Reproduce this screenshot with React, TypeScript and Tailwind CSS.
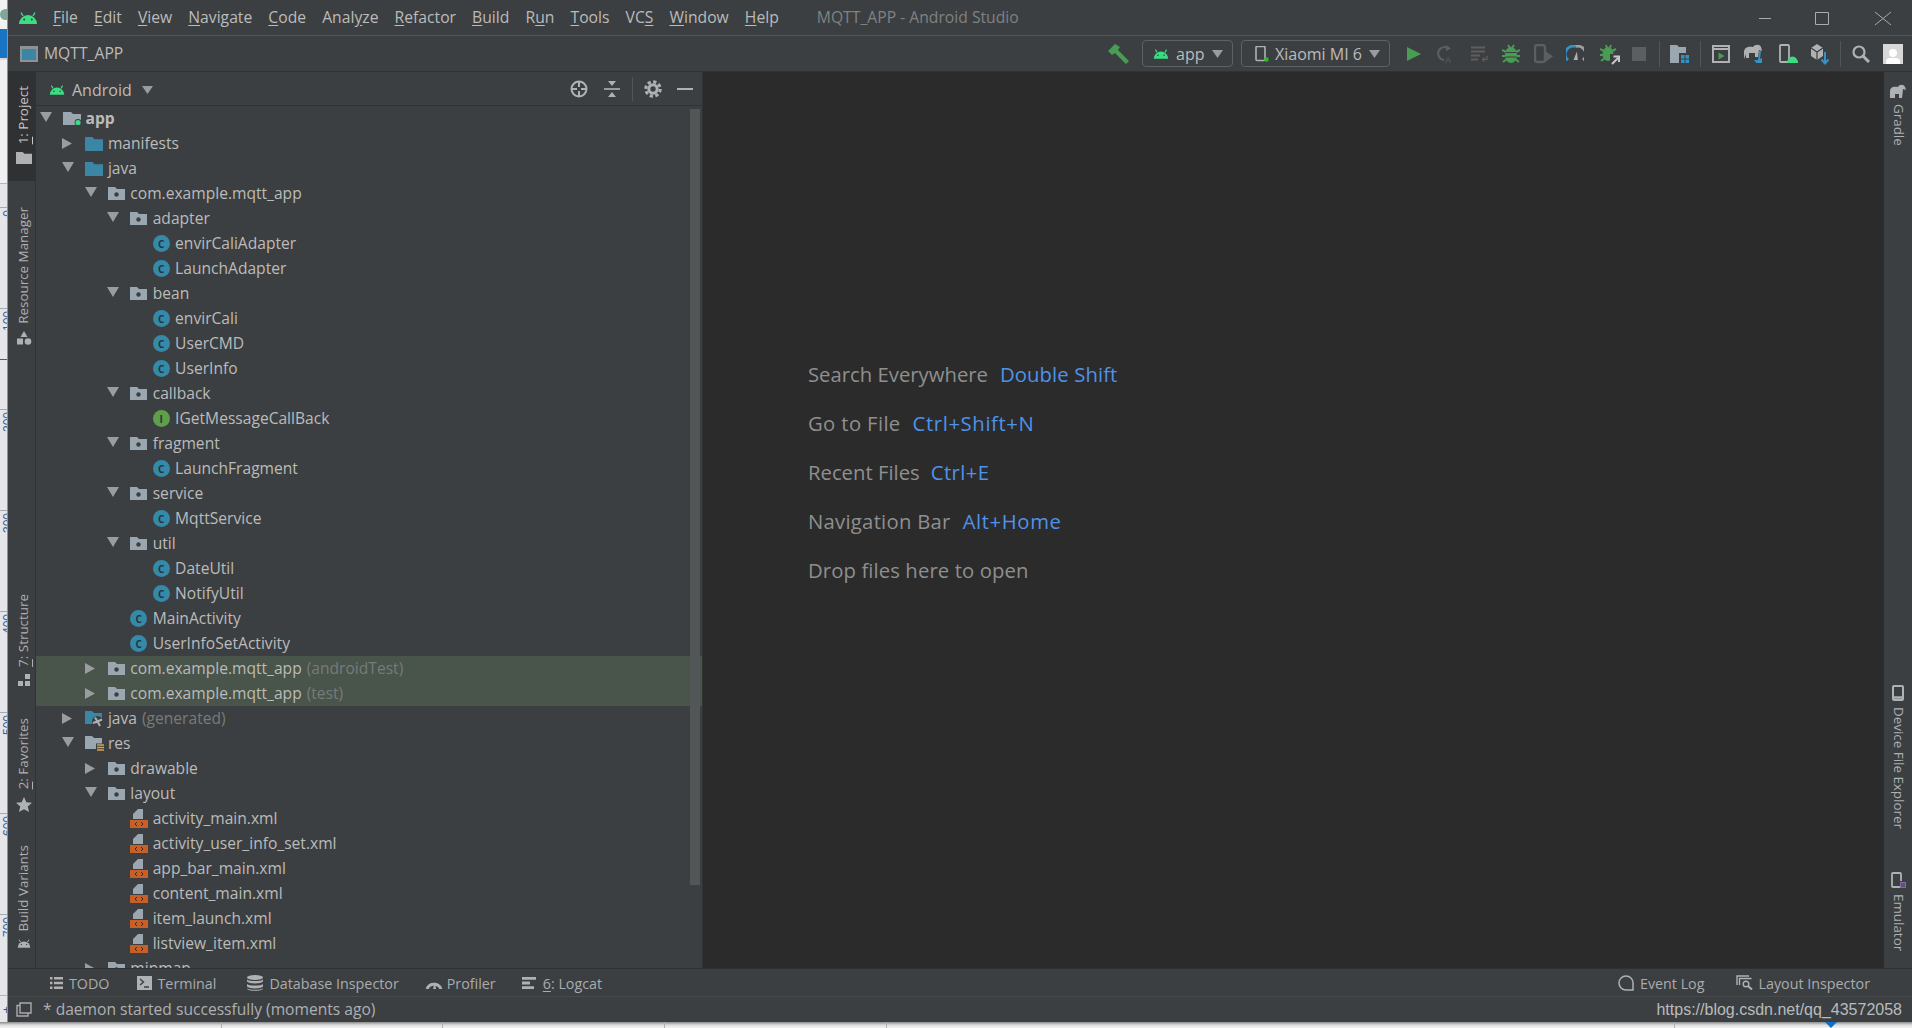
import type { ReactNode } from "react";

const FONT = "font-['Open_Sans',sans-serif]";

const Android = ({ className = "w-5 h-3", color = "#3ddc84" }: { className?: string; color?: string }) => (
  <svg viewBox="0 0 20 12" className={className}>
    <path d="M1 12a9 9 0 0 1 18 0z" fill={color} />
    <path d="M5 4 3 0.5M15 4 17 0.5" stroke={color} strokeWidth="1.4" />
    <circle cx="6.2" cy="7.6" r="1" fill="#3c3f41" />
    <circle cx="13.8" cy="7.6" r="1" fill="#3c3f41" />
  </svg>
);

const Folder = ({ color = "#9aa7b0", className = "w-[17px] h-[13px]" }: { color?: string; className?: string }) => (
  <svg viewBox="0 0 17 13" className={className}>
    <path d="M0 0h7l2 2h8v11H0z" fill={color} />
  </svg>
);

const PackageIcon = () => (
  <svg viewBox="0 0 17 13" className="w-[17px] h-[13px]">
    <path d="M0 0h7l2 2h8v11H0z" fill="#9aa7b0" />
    <circle cx="8.5" cy="7.5" r="2.2" fill="#3c3f41" />
  </svg>
);

const AppFolder = () => (
  <svg viewBox="0 0 19 15" className="w-[19px] h-[15px]">
    <path d="M0 0h8l2 2h8v11H0z" fill="#9aa7b0" transform="translate(0 1)" />
    <circle cx="15" cy="11.5" r="3.4" fill="#3c3f41" />
    <circle cx="15" cy="11.5" r="2.6" fill="#3ddc84" />
  </svg>
);

const GenFolder = () => (
  <svg viewBox="0 0 19 16" className="w-[19px] h-[16px]">
    <path d="M0 0h7l2 2h8v11H0z" fill="#3b86a5" />
    <circle cx="12.5" cy="10.5" r="5.5" fill="#3c3f41" />
    <path d="M12.5 10.5 10 6.5M12.5 10.5l4.5-2M12.5 10.5l2.5 4.5M12.5 10.5 8 12" stroke="#afb1b3" strokeWidth="2" />
  </svg>
);

const ResFolder = () => (
  <svg viewBox="0 0 19 16" className="w-[19px] h-[16px]">
    <path d="M0 0h7l2 2h8v11H0z" fill="#9aa7b0" />
    <rect x="11" y="7.5" width="8" height="8.5" fill="#3c3f41" />
    <path d="M12 9h7M12 11.5h7M12 14h7" stroke="#d9a343" strokeWidth="1.4" />
  </svg>
);

const ClassIcon = ({ letter = "C", bg = "bg-[#3589a9]" }: { letter?: string; bg?: string }) => (
  <span className={`flex h-[17px] w-[17px] items-center justify-center rounded-full ${bg} text-[10px] font-bold leading-none text-[#27343b]`}>
    {letter}
  </span>
);

const XmlIcon = () => (
  <svg viewBox="0 0 18 19" className="w-[18px] h-[19px]">
    <path d="M8 0h5v10H3V5z" fill="#9aa7b0" />
    <rect x="0" y="11" width="18" height="8" fill="#c75f27" />
    <path d="M7 13l-2 2 2 2M11 13l2 2-2 2" stroke="#2f2f2f" strokeWidth="1" fill="none" />
  </svg>
);

type Row = {
  d: number;
  label: string;
  icon: ReactNode;
  open?: boolean;
  bold?: boolean;
  suffix?: string;
  hl?: boolean;
};

const c = <ClassIcon />;
const p = <PackageIcon />;
const x = <XmlIcon />;
const blue = <Folder color="#3b86a5" className="w-[18px] h-[14px]" />;

const rows: Row[] = [
  { d: 0, label: "app", icon: <AppFolder />, open: true, bold: true },
  { d: 1, label: "manifests", icon: blue, open: false },
  { d: 1, label: "java", icon: blue, open: true },
  { d: 2, label: "com.example.mqtt_app", icon: p, open: true },
  { d: 3, label: "adapter", icon: p, open: true },
  { d: 4, label: "envirCaliAdapter", icon: c },
  { d: 4, label: "LaunchAdapter", icon: c },
  { d: 3, label: "bean", icon: p, open: true },
  { d: 4, label: "envirCali", icon: c },
  { d: 4, label: "UserCMD", icon: c },
  { d: 4, label: "UserInfo", icon: c },
  { d: 3, label: "callback", icon: p, open: true },
  { d: 4, label: "IGetMessageCallBack", icon: <ClassIcon letter="I" bg="bg-[#5f9e4a]" /> },
  { d: 3, label: "fragment", icon: p, open: true },
  { d: 4, label: "LaunchFragment", icon: c },
  { d: 3, label: "service", icon: p, open: true },
  { d: 4, label: "MqttService", icon: c },
  { d: 3, label: "util", icon: p, open: true },
  { d: 4, label: "DateUtil", icon: c },
  { d: 4, label: "NotifyUtil", icon: c },
  { d: 3, label: "MainActivity", icon: c },
  { d: 3, label: "UserInfoSetActivity", icon: c },
  { d: 2, label: "com.example.mqtt_app", icon: p, open: false, suffix: "(androidTest)", hl: true },
  { d: 2, label: "com.example.mqtt_app", icon: p, open: false, suffix: "(test)", hl: true },
  { d: 1, label: "java", icon: <GenFolder />, open: false, suffix: "(generated)" },
  { d: 1, label: "res", icon: <ResFolder />, open: true },
  { d: 2, label: "drawable", icon: p, open: false },
  { d: 2, label: "layout", icon: p, open: true },
  { d: 3, label: "activity_main.xml", icon: x },
  { d: 3, label: "activity_user_info_set.xml", icon: x },
  { d: 3, label: "app_bar_main.xml", icon: x },
  { d: 3, label: "content_main.xml", icon: x },
  { d: 3, label: "item_launch.xml", icon: x },
  { d: 3, label: "listview_item.xml", icon: x },
  { d: 2, label: "mipmap", icon: p, open: false },
];

const Arrow = ({ open }: { open?: boolean }) => {
  if (open === undefined) return <span className="w-[23px] shrink-0" />;
  return (
    <span className="flex w-[23px] shrink-0 items-center">
      {open ? (
        <svg viewBox="0 0 12 10" className="-mt-[3px] h-[10px] w-[12px]">
          <path d="M0 0h12L6 10z" fill="#9a9d9f" />
        </svg>
      ) : (
        <svg viewBox="0 0 10 11" className="-mt-[1px] h-[11px] w-[10px]">
          <path d="M0 0l10 5.5L0 11z" fill="#9a9d9f" />
        </svg>
      )}
    </span>
  );
};

const TreeRow = ({ row }: { row: Row }) => (
  <div
    className={`flex h-[25px] items-center whitespace-nowrap ${row.hl ? "bg-[#49544a]" : ""}`}
    style={{ paddingLeft: 4 + 22.4 * row.d }}
  >
    <Arrow open={row.open} />
    <span className="flex w-[22.5px] shrink-0 items-center">{row.icon}</span>
    <span className={row.bold ? "font-bold" : ""}>{row.label}</span>
    {row.suffix && <span className="ml-[5px] text-[#787b7c]">{row.suffix}</span>}
  </div>
);

const menu: [string, string, string][] = [
  ["", "F", "ile"],
  ["", "E", "dit"],
  ["", "V", "iew"],
  ["", "N", "avigate"],
  ["", "C", "ode"],
  ["Anal", "y", "ze"],
  ["", "R", "efactor"],
  ["", "B", "uild"],
  ["R", "u", "n"],
  ["", "T", "ools"],
  ["VC", "S", ""],
  ["", "W", "indow"],
  ["", "H", "elp"],
];

const Title = () => (
  <div className="flex h-[36px] shrink-0 items-center border-b border-[#505456] pl-[10px] text-[15.7px] text-[#bbbbbb]">
    <Android className="h-[12px] w-[20px]" />
    <div className="ml-[15px] flex gap-[16.1px]">
      {menu.map(([a, u, b]) => (
        <span key={u + b}>
          {a}
          <u className="underline-offset-2">{u}</u>
          {b}
        </span>
      ))}
    </div>
    <span className="ml-[38px] text-[#7f8284]">MQTT_APP - Android Studio</span>
    <div className="ml-auto flex items-center">
      <svg viewBox="0 0 136 14" className="mr-[19px] h-[14px] w-[136px]" fill="none" stroke="#a9abad" strokeWidth="1">
        <path d="M2 7.5h12M58.5 1.5h13v12h-13zM118 1l16 13M134 1 118 14" />
      </svg>
    </div>
  </div>
);

const Sep = ({ className = "" }: { className?: string }) => <span className={`h-[26px] w-px bg-[#515658] ${className}`} />;

const Caret = ({ className = "" }: { className?: string }) => (
  <svg viewBox="0 0 11 8" className={`h-[8px] w-[11px] ${className}`}>
    <path d="M0 0h11L5.5 8z" fill="#9a9d9f" />
  </svg>
);

const Combo = ({ className, children }: { className: string; children: ReactNode }) => (
  <div className={`flex h-[27px] items-center rounded-[4px] border border-[#5e6163] text-[16px] ${className}`}>{children}</div>
);

const Toolbar = () => (
  <div className="ml-auto flex items-center">
    <svg viewBox="0 0 21 20" className="h-[20px] w-[21px]">
      <path d="M0 7 7 0l5 3-2 3 11 11-3 3L7 9 4 11z" fill="#499c54" />
    </svg>
    <Combo className="ml-[13px] w-[91px] pl-[10px]">
      <Android className="h-[10px] w-[16px]" />
      <span className="ml-[7px]">app</span>
      <Caret className="ml-auto mr-[9px]" />
    </Combo>
    <Combo className="ml-[8px] w-[149px] pl-[13px]">
      <svg viewBox="0 0 14 16" className="h-[16px] w-[14px]">
        <rect x="1" y="0.5" width="9" height="14" rx="1" fill="none" stroke="#afb1b3" strokeWidth="1.6" />
        <circle cx="11.5" cy="13.5" r="2.2" fill="#22c21f" />
      </svg>
      <span className="ml-[6px]">Xiaomi MI 6</span>
      <Caret className="ml-auto mr-[9px]" />
    </Combo>
    <svg viewBox="0 0 14 14" className="ml-[17px] h-[14px] w-[14px]">
      <path d="M0 0l14 7-14 7z" fill="#499c54" />
    </svg>
    <svg viewBox="0 0 18 18" className="ml-[15px] h-[18px] w-[18px]" fill="none">
      <path d="M8 15a6.5 6.5 0 1 1 4-12" stroke="#5c5f61" strokeWidth="2.2" />
      <path d="M10 0l5 3.5L10 6z" fill="#5c5f61" />
      <text x="9" y="17.5" fontSize="9" fill="#5c5f61" fontFamily="Liberation Sans, sans-serif">A</text>
    </svg>
    <svg viewBox="0 0 18 18" className="ml-[16px] h-[18px] w-[18px]" fill="none" stroke="#5c5f61">
      <path d="M1 2.5h14M1 6.5h14M1 10.5h9M1 14.5h7" strokeWidth="2.2" />
      <path d="M17 11v3.5h-4M14.5 12.5 12.5 14.5l2 2" strokeWidth="1.2" />
    </svg>
    <svg viewBox="0 0 18 20" className="ml-[14px] h-[20px] w-[18px]">
      <ellipse cx="9" cy="11" rx="6" ry="8" fill="#499c54" />
      <path d="M0 6l4 2M18 6l-4 2M0 12h4M18 12h-4M1 18l4-3M17 18l-4-3M6 1l2 3M12 1l-2 3" stroke="#499c54" strokeWidth="2" />
      <path d="M3.5 8.5h11M3.5 13h11" stroke="#3c3f41" strokeWidth="1" />
    </svg>
    <svg viewBox="0 0 20 20" className="ml-[14px] h-[20px] w-[20px]" fill="none">
      <rect x="1" y="1" width="10" height="17" rx="2.5" stroke="#5c5f61" strokeWidth="2.4" />
      <path d="M10 6l9 6.5-9 6.5z" fill="#5c5f61" />
    </svg>
    <svg viewBox="0 0 19 18" className="ml-[12px] h-[17px] w-[18px]" fill="none">
      <path d="M2 16A8.5 8.5 0 0 1 10 1.5" stroke="#3592c4" strokeWidth="3" />
      <path d="M10 1.5A8.5 8.5 0 0 1 18 16" stroke="#9aa0a4" strokeWidth="3" />
      <path d="M8 16l3.5-9 1 9z" fill="#afb1b3" />
    </svg>
    <svg viewBox="0 0 20 22" className="ml-[16px] h-[22px] w-[20px]">
      <ellipse cx="8" cy="11" rx="5.5" ry="7" fill="#499c54" />
      <path d="M0 6l4 2M16 6l-4 2M0 12h4M16 12h-4M1 18l4-3M6 2l1 3M11 2l-1 3" stroke="#499c54" strokeWidth="2" />
      <rect x="10" y="11" width="10" height="11" fill="#3c3f41" />
      <path d="M12 21l6-6M13.5 13.5H19V19" stroke="#c5c7c9" strokeWidth="2" fill="none" />
    </svg>
    <span className="ml-[12px] h-[14px] w-[14px] bg-[#5c5f61]" />
    <Sep className="ml-[13px]" />
    <svg viewBox="0 0 19 18" className="ml-[10px] h-[18px] w-[19px]">
      <path d="M0 0h7l2 2h7v6H9v10H0z" fill="#9aa7b0" />
      <path d="M11 10h3.5v3.5H11zM15.5 10H19v3.5h-3.5zM11 14.5h3.5V18H11zM15.5 14.5H19V18h-3.5z" fill="#3592c4" />
    </svg>
    <Sep className="ml-[11px]" />
    <svg viewBox="0 0 18 18" className="ml-[11px] h-[18px] w-[18px]" fill="none">
      <rect x="1" y="1" width="16" height="16" stroke="#afb1b3" strokeWidth="2" />
      <path d="M1 4h16" stroke="#afb1b3" strokeWidth="2" />
      <path d="M6.5 7.5l6 3.5-6 3.5z" fill="#499c54" />
    </svg>
    <svg viewBox="0 0 20 20" className="ml-[13px] h-[20px] w-[20px]">
      <path d="M1 15V8C1 3 6 2 10 3c2-3 7-3 8 0l1 4-3-1-1 7h-3v-4H6v5H3v-4z" fill="#afb1b3" />
      <path d="M16 7l-1 9h-4l2.5 3H19v-5l-2 1 1-8z" fill="#3592c4" />
    </svg>
    <svg viewBox="0 0 20 20" className="ml-[16px] h-[20px] w-[20px]" fill="none">
      <rect x="1" y="1" width="9" height="17" rx="1" stroke="#afb1b3" strokeWidth="1.8" />
      <path d="M8 19a5.5 6.5 0 0 1 11 0z" fill="#3ddc84" />
    </svg>
    <svg viewBox="0 0 20 22" className="ml-[11px] h-[22px] w-[20px]" fill="none">
      <path d="M1 5l6-4 6 4v8l-6 4-6-4z" fill="#afb1b3" />
      <path d="M1 5l6 4 6-4M7 9v8" stroke="#3c3f41" strokeWidth="1.2" />
      <path d="M15 9v11M11.5 16.5 15 20.5l3.5-4" stroke="#3592c4" strokeWidth="2" />
    </svg>
    <Sep className="ml-[10px]" />
    <svg viewBox="0 0 18 18" className="ml-[11px] h-[18px] w-[18px]" fill="none" stroke="#afb1b3">
      <circle cx="7" cy="7" r="5.5" strokeWidth="2.2" />
      <path d="M11 11l6 6" strokeWidth="3" />
    </svg>
    <span className="ml-[13px] mr-[9px] flex h-[20px] w-[20px] flex-col items-center justify-end overflow-hidden bg-[#d8d8d8]">
      <span className="mb-px h-[8px] w-[8px] rounded-full bg-white" />
      <span className="h-[6px] w-[14px] rounded-t-sm bg-white" />
    </span>
  </div>
);

const NavBar = () => (
  <div className="flex h-[36px] shrink-0 items-center border-b border-[#323232] pl-[12px] text-[15.7px] text-[#bbbbbb]">
    <svg viewBox="0 0 18 16" className="h-[16px] w-[18px]">
      <rect x="0" y="0" width="18" height="16" fill="#8c9296" />
      <rect x="2" y="3" width="14" height="11" fill="#3b86a5" />
    </svg>
    <span className="ml-[6px]">MQTT_APP</span>
    <Toolbar />
  </div>
);

const PanelHeader = () => (
  <div className="flex h-[34px] shrink-0 items-center border-b border-[#323232] pl-[13px] pt-[2px] text-[16px] text-[#bbbbbb]">
    <Android className="h-[10px] w-[16px]" />
    <span className="ml-[7px]">Android</span>
    <Caret className="ml-[10px]" />
    <div className="-mt-[2px] ml-auto flex items-center">
      <svg viewBox="0 0 18 18" className="h-[18px] w-[18px]" fill="none" stroke="#afb1b3" strokeWidth="2">
        <circle cx="9" cy="9" r="7.5" />
        <path d="M9 1v6M9 11v6M1 9h6M11 9h6" />
      </svg>
      <svg viewBox="0 0 16 16" className="ml-[16px] h-[16px] w-[16px]">
        <path d="M4 0h8L8 5zM4 16h8l-4-5z" fill="#afb1b3" />
        <path d="M0 8h16" stroke="#afb1b3" strokeWidth="1.6" />
      </svg>
      <span className="ml-[12px] h-[24px] w-px bg-[#515658]" />
      <svg viewBox="0 0 18 18" className="ml-[11px] h-[18px] w-[18px]" fill="none" stroke="#afb1b3">
        <circle cx="9" cy="9" r="7.2" strokeWidth="3" strokeDasharray="3.2 2.45" />
        <circle cx="9" cy="9" r="4.2" strokeWidth="3" />
      </svg>
      <span className="ml-[15px] mr-[9px] h-[2px] w-[16px] bg-[#afb1b3]" />
    </div>
  </div>
);

const Tree = () => (
  <div className="relative flex-1 overflow-hidden text-[15.6px] leading-none text-[#bbbbbb]">
    {rows.map((row, i) => (
      <TreeRow key={i} row={row} />
    ))}
    <div className="absolute right-[2px] top-[3px] h-[776px] w-[10px] bg-[#535657]" />
  </div>
);

const Tab = ({ label, icon, className = "" }: { label: ReactNode; icon: ReactNode; className?: string }) => (
  <div className={`flex flex-col items-center gap-[7px] pl-[4px] ${className}`}>
    <span className="rotate-180 whitespace-nowrap [writing-mode:vertical-rl]">{label}</span>
    {icon}
  </div>
);

const LeftStripe = () => (
  <div className="flex w-[28px] shrink-0 flex-col justify-between border-r border-[#323232] pb-[19px] text-[13.4px] leading-none text-[#aeb0b2]">
    <div className="flex flex-col">
      <Tab
        className="h-[109px] bg-[#2f3133] pt-[14px] text-[#c8c8c8]"
        label={<><u className="underline-offset-2">1</u>: Project</>}
        icon={<Folder color="#afb1b3" className="h-[14px] w-[16px]" />}
      />
      <Tab
        className="pt-[26px]"
        label="Resource Manager"
        icon={
          <svg viewBox="0 0 16 14" className="h-[14px] w-[16px]" fill="#afb1b3">
            <path d="M8 0l3.5 6h-7z" />
            <rect x="1" y="7.5" width="6" height="6" />
            <circle cx="12" cy="10.5" r="3.3" />
          </svg>
        }
      />
    </div>
    <div className="flex flex-col">
      <Tab
        label={<><u className="underline-offset-2">7</u>: Structure</>}
        icon={
          <svg viewBox="0 0 14 12" className="h-[12px] w-[14px]" fill="#afb1b3">
            <path d="M8 0h5v5H8zM1 7h5v5H1zM8 7h5v5H8z" />
          </svg>
        }
      />
      <Tab
        className="mt-[32px]"
        label={<><u className="underline-offset-2">2</u>: Favorites</>}
        icon={
          <svg viewBox="0 0 16 15" className="h-[15px] w-[16px]" fill="#afb1b3">
            <path d="M8 0l2.4 5.2 5.6.6-4.2 3.8L13 15 8 12.2 3 15l1.2-5.4L0 5.8l5.6-.6z" />
          </svg>
        }
      />
      <Tab
        className="mt-[33px]"
        label="Build Variants"
        icon={<Android color="#afb1b3" className="h-[11px] w-[14px]" />}
      />
    </div>
  </div>
);

const RightTab = ({ label, icon, className = "" }: { label: string; icon: ReactNode; className?: string }) => (
  <div className={`flex flex-col items-center gap-[6px] ${className}`}>
    {icon}
    <span className="whitespace-nowrap [writing-mode:vertical-rl]">{label}</span>
  </div>
);

const RightStripe = () => (
  <div className="flex w-[28px] shrink-0 flex-col justify-between bg-[#3c3f41] pb-[17px] pt-[12px] text-[13.4px] leading-none text-[#aeb0b2]">
    <RightTab
      label="Gradle"
      icon={
        <svg viewBox="0 0 16 14" className="h-[14px] w-[16px]" fill="#afb1b3">
          <path d="M0 14V7C0 3 4 2 8 3c1-3 6-3 7 0l1 3-3-1-1 9h-3v-4H5v4z" />
        </svg>
      }
    />
    <div className="flex flex-col">
      <RightTab
        label="Device File Explorer"
        icon={
          <svg viewBox="0 0 12 16" className="h-[16px] w-[12px]" fill="none">
            <rect x="1" y="1" width="10" height="14" rx="1" stroke="#afb1b3" strokeWidth="2" />
            <path d="M1 12.5h10" stroke="#afb1b3" strokeWidth="2.5" />
          </svg>
        }
      />
      <RightTab
        className="mt-[43px]"
        label="Emulator"
        icon={
          <svg viewBox="0 0 15 16" className="h-[16px] w-[15px]" fill="none">
            <path d="M9 15H2a1 1 0 0 1-1-1V2a1 1 0 0 1 1-1h7a1 1 0 0 1 1 1v7" stroke="#afb1b3" strokeWidth="1.8" />
            <rect x="9" y="10" width="6" height="6" fill="#8668a8" />
            <path d="M11 11v4M13 11v4" stroke="#3c3f41" />
          </svg>
        }
      />
    </div>
  </div>
);

const Welcome = () => (
  <div className="flex min-w-0 flex-1 flex-col bg-[#2b2b2b] pl-[105px] pt-[278px] text-[20.3px] leading-[49px] text-[#8f8f8f]">
    <p>
      Search Everywhere<span className="ml-[12px] tracking-[0.1px] text-[#4f92ea]">Double Shift</span>
    </p>
    <p className="tracking-[0.36px]">
      Go to File<span className="ml-[12px] tracking-[0.6px] text-[#4f92ea]">Ctrl+Shift+N</span>
    </p>
    <p>
      Recent Files<span className="ml-[11px] tracking-[0.4px] text-[#4f92ea]">Ctrl+E</span>
    </p>
    <p className="tracking-[0.26px]">
      Navigation Bar<span className="ml-[12px] tracking-[0.6px] text-[#4f92ea]">Alt+Home</span>
    </p>
    <p className="tracking-[0.1px]">Drop files here to open</p>
  </div>
);

const ToolButton = ({ icon, children, className = "" }: { icon: ReactNode; children: ReactNode; className?: string }) => (
  <span className={`flex items-center gap-[6px] ${className}`}>
    {icon}
    <span className="pt-[2px]">{children}</span>
  </span>
);

const BottomBar = () => (
  <div className="flex h-[28px] shrink-0 items-center border-t border-[#2f3133] pl-[42px] pr-[42px] text-[14.3px] text-[#a9acae]">
    <ToolButton
      icon={
        <svg viewBox="0 0 13 12" className="h-[12px] w-[13px]" fill="#afb1b3">
          <path d="M0 0h2.5v2.5H0zM4 0h9v2.5H4zM0 4.7h2.5v2.5H0zM4 4.7h9v2.5H4zM0 9.5h2.5V12H0zM4 9.5h9V12H4z" />
        </svg>
      }
    >
      TODO
    </ToolButton>
    <ToolButton
      className="ml-[27px]"
      icon={
        <svg viewBox="0 0 15 14" className="h-[14px] w-[15px]" fill="none">
          <rect x="0" y="0" width="15" height="14" fill="#afb1b3" />
          <path d="M3 3l3.5 3L3 9M7 11h5" stroke="#3c3f41" strokeWidth="1.4" />
        </svg>
      }
    >
      Terminal
    </ToolButton>
    <ToolButton
      className="ml-[31px]"
      icon={
        <svg viewBox="0 0 16 16" className="h-[16px] w-[16px]" fill="#afb1b3">
          <ellipse cx="8" cy="2.5" rx="8" ry="2.5" />
          <path d="M0 4.5c2 2 14 2 16 0v2c-2 2.5-14 2.5-16 0zM0 9c2 2 14 2 16 0v2.5c-2 2.5-14 2.5-16 0zM0 13.2c3 2 13 2 16 0 0 3.5-16 3.5-16 0z" />
        </svg>
      }
    >
      Database Inspector
    </ToolButton>
    <ToolButton
      className="ml-[26px] !gap-[4px]"
      icon={
        <svg viewBox="0 0 18 13" className="h-[13px] w-[18px]" fill="none">
          <path d="M2 13A7.5 7.5 0 0 1 16 13" stroke="#afb1b3" strokeWidth="3" />
          <path d="M8 13l2-7 1 7z" fill="#afb1b3" />
        </svg>
      }
    >
      Profiler
    </ToolButton>
    <ToolButton
      className="ml-[26px]"
      icon={
        <svg viewBox="0 0 15 12" className="h-[12px] w-[15px]" fill="#afb1b3">
          <path d="M0 0h14v2.8H0zM0 4.6h8v2.8H0zM0 9.2h12V12H0z" />
        </svg>
      }
    >
      <u className="underline-offset-2">6</u>: Logcat
    </ToolButton>
    <ToolButton
      className="ml-auto"
      icon={
        <svg viewBox="0 0 16 16" className="h-[16px] w-[16px]" fill="none">
          <path d="M8 1a7 7 0 0 1 7 7v7H8A7 7 0 0 1 8 1z" stroke="#afb1b3" strokeWidth="1.5" />
        </svg>
      }
    >
      Event Log
    </ToolButton>
    <ToolButton
      className="ml-[31px]"
      icon={
        <svg viewBox="0 0 17 15" className="h-[15px] w-[17px]" fill="none" stroke="#afb1b3" strokeWidth="1.4">
          <path d="M1 10V1h12M3.5 10V3.5h12" />
          <circle cx="10" cy="9" r="2.8" />
          <path d="M12 11l4 3.5" strokeWidth="2" />
        </svg>
      }
    >
      Layout Inspector
    </ToolButton>
  </div>
);

const StatusBar = () => (
  <div className="flex h-[26px] shrink-0 items-center border-t border-[#47494b] pl-[8px] pr-[10px] text-[15.6px] text-[#aeb0b2]">
    <svg viewBox="0 0 16 15" className="h-[15px] w-[16px]" fill="none" stroke="#a9abad" strokeWidth="1.4">
      <path d="M4 1h11v10H4zM4 3.5H1V14h11v-3" />
    </svg>
    <span className="ml-[11px]">* daemon started successfully (moments ago)</span>
    <span className="ml-auto font-['Liberation_Sans',sans-serif] text-[16px] text-[#b9bbbd]">https://blog.csdn.net/qq_43572058</span>
  </div>
);

const ticks = ["200", "300", "400", "500", "600"];

const RulerMark = ({ label, className = "h-[101px]" }: { label: string; className?: string }) => (
  <div className={`shrink-0 overflow-hidden border-t border-[#a8a8b0] pl-[2px] pt-[2px] ${className}`}>
    <span className="block rotate-180 font-['Liberation_Sans',sans-serif] text-[12px] leading-[12px] text-[#35629a] [writing-mode:vertical-rl]">
      {label}
    </span>
  </div>
);

const Ruler = () => (
  <div className="flex w-[8px] shrink-0 flex-col overflow-hidden border-r border-[#8f8f95] bg-[#e6e6ea]">
    <div className="flex h-[29px] shrink-0 items-center bg-[#f2f2f2]">
      <span className="h-[11px] w-[8px] rounded-l-full bg-[#7fa89a]" />
    </div>
    <div className="h-[29px] shrink-0 bg-[#1a74c4]" />
    <div className="h-[126px] shrink-0 border-t-2 border-b border-t-[#d8d8dc] border-b-[#b4b4ba] bg-[#f0f0f2]" />
    <div className="h-[23px] shrink-0" />
    <RulerMark label="0" />
    <div className="h-[101px] shrink-0 overflow-hidden border-t border-[#a8a8b0] pl-[2px] pt-[2px]">
      <span className="block rotate-180 font-['Liberation_Sans',sans-serif] text-[12px] leading-[12px] text-[#35629a] [writing-mode:vertical-rl]">
        100
      </span>
      <div className="mt-[28px] -ml-[2px] h-[1px] w-[8px] bg-[#e02020]" />
    </div>
    {ticks.map((t) => (
      <RulerMark key={t} label={t} />
    ))}
    <RulerMark label="700" className="h-[81px]" />
    <div className="flex-1 border-t border-[#b4b4ba] pl-[3px] pt-[8px] text-[12px] leading-none text-[#35506e]">+</div>
  </div>
);

const BottomStrip = () => (
  <div className="flex h-[6px] shrink-0 bg-linear-to-b from-[#8b8b8b] via-[#dcdcdc] to-[#f4f4f4]">
    <span className="w-[222px] border-r border-[#b0b0b0]" />
    <span className="w-[221px] border-r border-[#b0b0b0]" />
    <span className="w-[222px] border-r border-[#b0b0b0]" />
    <span className="w-[222px] border-r border-[#b0b0b0]" />
    <span className="w-[788px] border-r border-[#b0b0b0]" />
    <span className="ml-[150px] h-0 w-0 border-x-[6px] border-t-[6px] border-x-transparent border-t-[#0f6fc6]" />
  </div>
);

export default function App() {
  return (
    <div className={`flex h-[1028px] w-[1912px] flex-col overflow-hidden bg-[#f4f4f4] ${FONT}`}>
      <div className="flex min-h-0 flex-1">
        <Ruler />
        <div className="flex min-w-0 flex-1 flex-col bg-[#3c3f41]">
          <Title />
          <NavBar />
          <div className="flex min-h-0 flex-1">
            <LeftStripe />
            <div className="flex w-[667px] shrink-0 flex-col border-r border-[#323232]">
              <PanelHeader />
              <Tree />
            </div>
            <Welcome />
            <RightStripe />
          </div>
          <BottomBar />
          <StatusBar />
        </div>
      </div>
      <BottomStrip />
    </div>
  );
}
